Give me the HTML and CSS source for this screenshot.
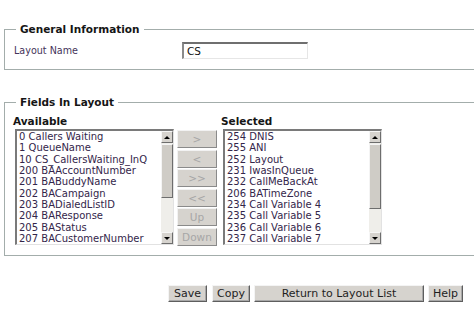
FILE: index.html
```html
<!DOCTYPE html>
<html lang="en">
<head>
  <meta charset="UTF-8">
  <title>Layout</title>
  <link rel="stylesheet" href="styles.css">
</head>
<body>
  <div class="page">
    <fieldset class="box general">
      <legend>General Information</legend>
      <div class="field-row">
        <label for="layoutName">Layout Name</label>
        <input class="text" id="layoutName" type="text" value="CS">
      </div>
    </fieldset>

    <fieldset class="box fields">
      <legend>Fields In Layout</legend>
      <div class="picker">
        <div class="col">
          <div class="col-title">Available</div>
          <div class="listbox">
            <ul class="items">
              <li>0 Callers Waiting</li>
              <li>1 QueueName</li>
              <li>10 CS_CallersWaiting_InQ</li>
              <li>200 BAAccountNumber</li>
              <li>201 BABuddyName</li>
              <li>202 BACampaign</li>
              <li>203 BADialedListID</li>
              <li>204 BAResponse</li>
              <li>205 BAStatus</li>
              <li>207 BACustomerNumber</li>
            </ul>
            <div class="scroll">
              <div class="arrow up"><span></span></div>
              <div class="track">
                <div class="thumb short"></div>
              </div>
              <div class="arrow down"><span></span></div>
            </div>
          </div>
        </div>

        <div class="movers">
          <button class="mover" disabled>&gt;</button>
          <button class="mover" disabled>&lt;</button>
          <button class="mover" disabled>&gt;&gt;</button>
          <button class="mover" disabled>&lt;&lt;</button>
          <button class="mover" disabled>Up</button>
          <button class="mover" disabled>Down</button>
        </div>

        <div class="col">
          <div class="col-title">Selected</div>
          <div class="listbox">
            <ul class="items">
              <li>254 DNIS</li>
              <li>255 ANI</li>
              <li>252 Layout</li>
              <li>231 IwasInQueue</li>
              <li>232 CallMeBackAt</li>
              <li>206 BATimeZone</li>
              <li>234 Call Variable 4</li>
              <li>235 Call Variable 5</li>
              <li>236 Call Variable 6</li>
              <li>237 Call Variable 7</li>
            </ul>
            <div class="scroll">
              <div class="arrow up"><span></span></div>
              <div class="track">
                <div class="thumb long"></div>
              </div>
              <div class="arrow down"><span></span></div>
            </div>
          </div>
        </div>
      </div>
    </fieldset>

    <div class="actions">
      <button class="btn save">Save</button>
      <button class="btn copy">Copy</button>
      <button class="btn wide">Return to Layout List</button>
      <button class="btn help">Help</button>
    </div>
  </div>
</body>
</html>
```

FILE: styles.css
```css
body {
  margin: 0;
  overflow: hidden;
  background: #fff;
  font-family: "DejaVu Sans", Verdana, sans-serif;
  font-size: 10px;
}

.page {
  padding: 23px 0 0 4px;
}

/* fieldsets run off the right edge, so no right border */
.box {
  min-width: 0;
  margin: 0;
  padding: 6px 9px 10px 9px;
  border: 1px solid #a3adab;
  border-right: 0;
}

.box legend {
  margin-left: 2px;
  padding: 0 4px;
  font-size: 10.5px;
  line-height: 13px;
  font-weight: bold;
  color: #151515;
}

.field-row {
  display: flex;
  align-items: center;
  height: 17px;
}

.field-row label {
  width: 168px;
  font-size: 9.6px;
  color: #45335a;
}

.text {
  box-sizing: border-box;
  width: 126px;
  height: 17px;
  margin: 0;
  padding: 0 3px;
  border-style: solid;
  border-width: 2px 1px 1px 2px;
  border-color: #6f6f6f #e6e6e6 #e6e6e6 #8a8a8a;
  font-family: inherit;
  font-size: 10.5px;
  color: #111;
  outline: none;
}

.fields {
  margin-top: 26px;
  padding-bottom: 9px;
}

.picker {
  display: flex;
  align-items: flex-start;
}

.col {
  width: 160px;
}

.col-title {
  margin: 0 0 1px -1px;
  font-size: 10.5px;
  line-height: 13px;
  font-weight: bold;
  color: #151515;
}

.listbox {
  display: flex;
  width: 159px;
  margin-left: 1px;
  box-sizing: border-box;
  border-style: solid;
  border-width: 2px 1px 1px 2px;
  border-color: #7a7a7a #e2e2e2 #e2e2e2 #7a7a7a;
  background: #fff;
}

.items {
  flex: 1;
  margin: 0;
  padding: 0 0 0 2px;
  list-style: none;
  font-size: 10px;
  line-height: 11.35px;
  color: #33264a;
  white-space: nowrap;
  overflow: hidden;
}

.scroll {
  display: flex;
  flex-direction: column;
  width: 12px;
  background: #efeeea;
}

.arrow {
  display: flex;
  align-items: center;
  justify-content: center;
  height: 12px;
  box-sizing: border-box;
  background: #d6d3ce;
  border-style: solid;
  border-width: 1px;
  border-color: #f6f6f6 #6d6d6d #6d6d6d #f6f6f6;
}

.arrow span {
  width: 0;
  height: 0;
  border-left: 3px solid transparent;
  border-right: 3px solid transparent;
}

.arrow.up span {
  border-bottom: 3px solid #000;
}

.arrow.down span {
  border-top: 3px solid #000;
}

.track {
  flex: 1;
  padding-top: 1px;
}

.thumb {
  box-sizing: border-box;
  background: #cfccc6;
  border-style: solid;
  border-width: 1px;
  border-color: #f4f4f4 #6d6d6d #6d6d6d #f4f4f4;
}

.thumb.short {
  height: 54px;
}

.thumb.long {
  height: 65px;
}

.movers {
  display: flex;
  flex-direction: column;
  gap: 1.5px;
  width: 40px;
  margin: 15px 5px 0 3px;
}

.mover {
  height: 18px;
  margin: 0;
  padding: 0;
  background: #d6d3ce;
  border-style: solid;
  border-width: 1px;
  border-color: #f2f2f2 #8a8a8a #8a8a8a #f2f2f2;
  font-family: inherit;
  font-size: 10.5px;
  color: #a6a6a6;
}

.actions {
  display: flex;
  justify-content: flex-end;
  gap: 4px;
  width: 459px;
  margin-top: 29px;
}

.btn {
  height: 17px;
  margin: 0;
  padding: 0;
  background: #d6d3ce;
  border-style: solid;
  border-width: 1px;
  border-color: #f4f4f4 #5e5e5e #5e5e5e #f4f4f4;
  box-shadow: inset -1px -1px #a8a8a8;
  font-family: inherit;
  font-size: 11px;
  color: #1e1e1e;
}

.btn.save {
  width: 39px;
  margin-right: 1px;
}

.btn.copy {
  width: 38px;
}

.btn.wide {
  width: 170px;
}

.btn.help {
  width: 35px;
}
```
